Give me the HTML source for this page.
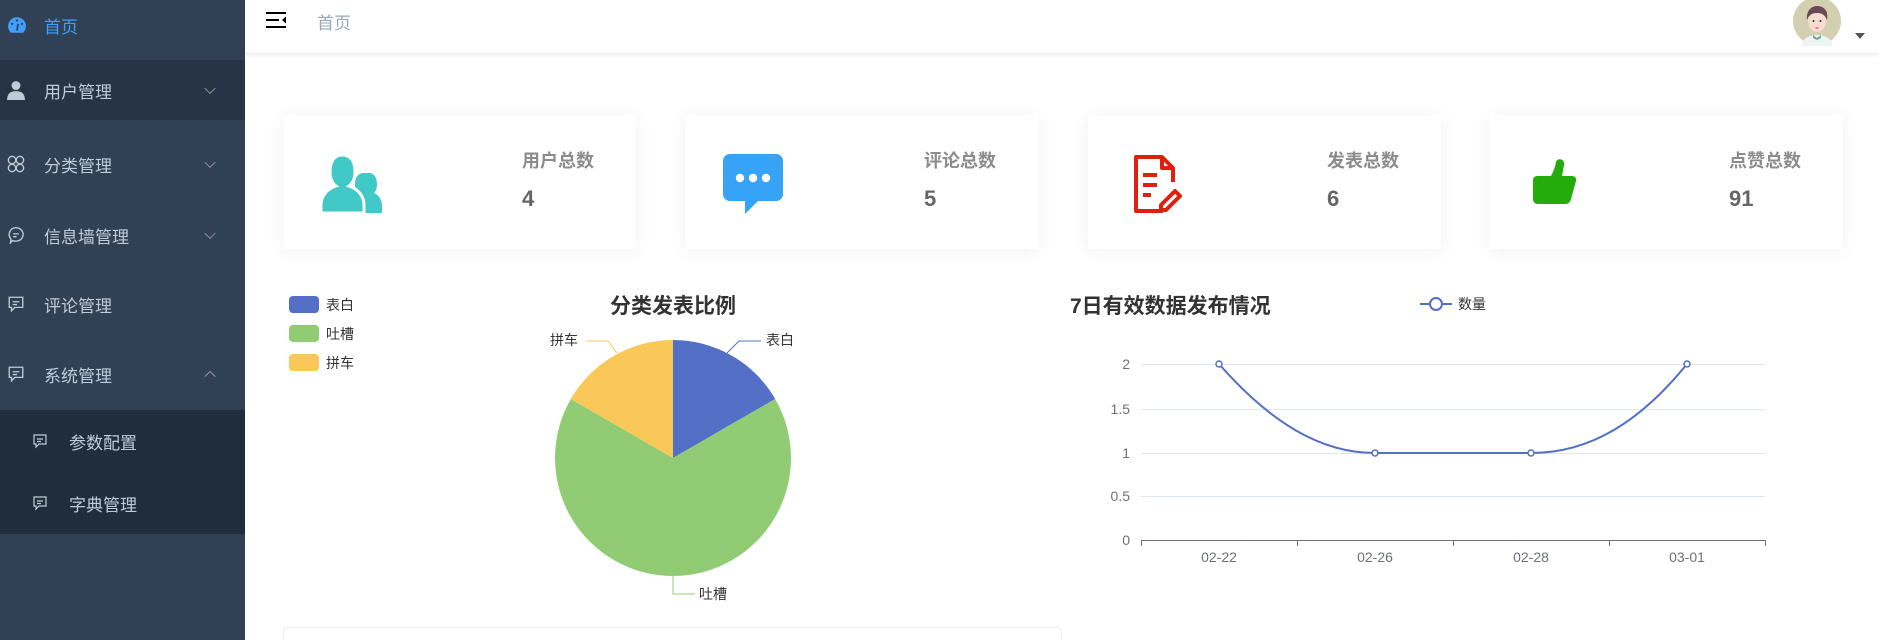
<!DOCTYPE html>
<html><head><meta charset="utf-8"><style>
*{margin:0;padding:0;box-sizing:border-box}
html,body{width:1879px;height:640px;overflow:hidden}
body{background:#fff;font-family:"Liberation Sans","Noto Sans CJK SC",sans-serif;position:relative}
.side{position:absolute;left:0;top:0;width:245px;height:640px;background:#304156}
.mi{position:absolute;left:0;width:245px;height:70px;color:#bfcbd9;font-size:17px;display:flex;align-items:center}
.mi .ic{position:absolute;left:7px;top:50%;transform:translateY(-50%);display:block;line-height:0}
.mi .t{position:absolute;left:44px}
.mi .ar{position:absolute;left:206px;top:50%;width:8px;height:8px;border-right:1px solid #909399;border-bottom:1px solid #909399;transform:translateY(-70%) rotate(45deg)}
.mi .ar.up{transform:translateY(-20%) rotate(-135deg)}
.sub{position:absolute;left:0;top:410px;width:245px;height:124px;background:#1f2d3d}
.header{position:absolute;left:245px;top:0;width:1634px;height:54px;background:#fff;box-shadow:0 1px 4px rgba(0,21,41,.08);border-bottom:1px solid #eee}
.card{position:absolute;top:115px;width:353px;height:134px;background:#fff;box-shadow:0 2px 18px rgba(0,0,0,.06)}
.card .ic{position:absolute;left:37px;top:38px;width:62px;height:62px}
.card .tt{position:absolute;left:239px;top:32px;font-size:18px;font-weight:bold;color:#8c8c8c}
.card .nm{position:absolute;left:239px;top:71px;font-size:22px;font-weight:bold;color:#666}
svg text{font-family:"Liberation Sans","Noto Sans CJK SC",sans-serif}
</style></head><body>
<div class="side">
 <div class="mi" style="top:-10px;color:#409eff"><span class="ic"><svg width="20" height="18" viewBox="0 0 18 16"><path d="M9 1A8 8 0 0 0 1 9c0 2.5 1 4.5 2.5 6h11C16 13.5 17 11.5 17 9A8 8 0 0 0 9 1z" fill="#409eff"/><circle cx="9" cy="4" r="1" fill="#304156"/><circle cx="4.5" cy="7" r="1" fill="#304156"/><circle cx="13.5" cy="7" r="1" fill="#304156"/><path d="M9 13 L10 7" stroke="#304156" stroke-width="1.6"/></svg></span><span class="t">首页</span></div>
 <div class="mi" style="top:60px;background:#263445;height:60px"><span class="ic"><svg width="18" height="20" viewBox="0 0 16 18"><circle cx="8" cy="5" r="4" fill="#bfcbd9"/><path d="M0 18c0-6 3-8 8-8s8 2 8 8z" fill="#bfcbd9"/></svg></span><span class="t">用户管理</span><span class="ar"></span></div>
 <div class="mi" style="top:129px"><span class="ic"><svg width="18" height="18" viewBox="0 0 16 16" fill="none" stroke="#bfcbd9" stroke-width="1.2"><circle cx="4.5" cy="4.5" r="3.3"/><circle cx="11.5" cy="4.5" r="3.3"/><circle cx="4.5" cy="11.5" r="3.3"/><circle cx="11.5" cy="11.5" r="3.3"/></svg></span><span class="t">分类管理</span><span class="ar"></span></div>
 <div class="mi" style="top:200px"><span class="ic"><svg width="18" height="18" viewBox="0 0 16 16" fill="none" stroke="#bfcbd9" stroke-width="1.2"><path d="M8 1.5a6.5 6 0 1 1-3 11.4L3 15l.5-3.5A6 6 0 0 1 8 1.5z"/><path d="M5.5 7h5M5.5 9.5h3"/></svg></span><span class="t">信息墙管理</span><span class="ar"></span></div>
 <div class="mi" style="top:269px"><span class="ic"><svg width="18" height="18" viewBox="0 0 16 16" fill="none" stroke="#bfcbd9" stroke-width="1.2"><path d="M2 2h12v9H7l-3 3v-3H2z"/><path d="M5 6h6M5 8.5h4"/></svg></span><span class="t">评论管理</span></div>
 <div class="mi" style="top:339px"><span class="ic"><svg width="18" height="18" viewBox="0 0 16 16" fill="none" stroke="#bfcbd9" stroke-width="1.2"><path d="M2 2h12v9H7l-3 3v-3H2z"/><path d="M5 6h6M5 8.5h4"/></svg></span><span class="t">系统管理</span><span class="ar up"></span></div>
 <div class="sub">
  <div class="mi" style="top:0;height:62px"><span class="ic" style="left:32px"><svg width="16" height="16" fill="none" stroke="#bfcbd9" stroke-width="1.2"><path d="M2 2h12v9H7l-3 3v-3H2z"/><path d="M5 6h6M5 8.5h4"/></svg></span><span class="t" style="left:69px">参数配置</span></div>
  <div class="mi" style="top:62px;height:62px"><span class="ic" style="left:32px"><svg width="16" height="16" fill="none" stroke="#bfcbd9" stroke-width="1.2"><path d="M2 2h12v9H7l-3 3v-3H2z"/><path d="M5 6h6M5 8.5h4"/></svg></span><span class="t" style="left:69px">字典管理</span></div>
 </div>
</div>
<div class="header">
 <svg style="position:absolute;left:21px;top:12px" width="20" height="16"><path d="M0 1h20M0 8h13M0 15h20" stroke="#000" stroke-width="2"/><path d="M20 4.5v7l-4-3.5z" fill="#000"/></svg>
 <span style="position:absolute;left:72px;top:9px;font-size:17px;color:#97a8be">首页</span>
 <svg style="position:absolute;left:1548px;top:0" width="48" height="46" viewBox="0 0 48 46"><circle cx="24" cy="21" r="24" fill="#d2d0b0"/><path d="M8 46c2-8 8-11 16-11s14 3 16 11z" fill="#eef4f4"/><path d="M20 35l4 3 4-3v3l-4 2-4-2z" fill="#6aa88e"/><ellipse cx="24" cy="21" rx="9" ry="11" fill="#f7ddd0"/><path d="M14 20c-1-10 5-14 10-14s12 3 10 14c-2-5-5-7-10-7s-8 2-10 7z" fill="#6a4a55"/><circle cx="20.5" cy="21" r="1" fill="#333"/><circle cx="27.5" cy="21" r="1" fill="#333"/><path d="M22.5 28h3" stroke="#e57" stroke-width="1.4"/></svg>
 <svg style="position:absolute;left:1610px;top:33px" width="10" height="6"><path d="M0 0h10L5 6z" fill="#555"/></svg>
</div>

<div class="card" style="left:283px"><svg class="ic" viewBox="0 0 62 62">
 <path d="M44 20c-6 0-9 5-9 11 0 4 1 7 3 9-5 2-8 7-8 13v7h32v-7c0-6-3-11-8-13 2-2 3-5 3-9 0-6-3-11-8-11z" fill="#40c9c6"/>
 <path d="M22 2c-8 0-12 7-12 17 0 7 3 12 6 14C7 36 1 43 1 52v8h43v-8c0-9-6-16-15-19 3-2 6-7 6-14C35 9 31 2 22 2z" fill="#40c9c6" stroke="#fff" stroke-width="3"/>
</svg><div class="tt">用户总数</div><div class="nm">4</div></div>
<div class="card" style="left:685px"><svg class="ic" viewBox="0 0 62 62"><rect x="1" y="1" width="60" height="47" rx="7" fill="#36a3f7"/><path d="M23 47v14l14-14z" fill="#36a3f7"/><circle cx="18" cy="25" r="4.2" fill="#fff"/><circle cx="31" cy="25" r="4.2" fill="#fff"/><circle cx="44" cy="25" r="4.2" fill="#fff"/></svg><div class="tt">评论总数</div><div class="nm">5</div></div>
<div class="card" style="left:1088px"><svg class="ic" viewBox="0 0 62 62" fill="none" stroke="#e0200e" stroke-width="4" stroke-linejoin="round"><path d="M38 58H11V4h26l11 11v14"/><path d="M37 4v11h11"/><path d="M18 22h14M18 32h14M18 42h8"/><path d="M36 52l14-14 5 5-14 14h-5z"/></svg><div class="tt">发表总数</div><div class="nm">6</div></div>
<div class="card" style="left:1490px"><svg class="ic" viewBox="0 0 62 62"><path d="M6 28c0-4 2-5 5-5h13c2-4 4-8 5-14 1-4 9-4 8 3l-2 11h10c3 0 5 3 4 5l-5 18c-1 4-3 5-6 5H11c-3 0-5-2-5-5z" fill="#24ac0d"/></svg><div class="tt">点赞总数</div><div class="nm">91</div></div>

<svg style="position:absolute;left:0;top:0" width="1879" height="640">
 <rect x="289" y="296" width="30" height="17" rx="4" fill="#5470c6"/><text x="326" y="310" font-size="14" fill="#333">表白</text>
 <rect x="289" y="325" width="30" height="17" rx="4" fill="#91cc75"/><text x="326" y="339" font-size="14" fill="#333">吐槽</text>
 <rect x="289" y="354" width="30" height="17" rx="4" fill="#fac858"/><text x="326" y="368" font-size="14" fill="#333">拼车</text>
 <text x="673" y="313" font-size="21" font-weight="bold" fill="#333" text-anchor="middle">分类发表比例</text>
 <path d="M673 458V340A118 118 0 0 1 775.2 399z" fill="#5470c6"/>
 <path d="M673 458L775.2 399A118 118 0 1 1 570.8 399z" fill="#91cc75"/>
 <path d="M673 458L570.8 399A118 118 0 0 1 673 340z" fill="#fac858"/>
 <path d="M727 353l12-12h22" fill="none" stroke="#5470c6"/><text x="766" y="345" font-size="14" fill="#333">表白</text>
 <path d="M617 353l-9-12h-22" fill="none" stroke="#fac858"/><text x="550" y="345" font-size="14" fill="#333">拼车</text>
 <path d="M673 576v18h22" fill="none" stroke="#91cc75"/><text x="699" y="599" font-size="14" fill="#333">吐槽</text>
 <text x="1070" y="313" font-size="21" font-weight="bold" fill="#333">7日有效数据发布情况</text>
 <path d="M1420 304h32" stroke="#5470c6" stroke-width="2"/><circle cx="1436" cy="304" r="6" fill="#fff" stroke="#5470c6" stroke-width="2"/>
 <text x="1458" y="309" font-size="14" fill="#333">数量</text>
 <g stroke="#e0e6f1"><path d="M1141 364.5H1765M1141 409.5H1765M1141 453.5H1765M1141 496.5H1765"/></g>
 <path d="M1141 540.5H1765" stroke="#6e7079"/>
 <g stroke="#6e7079"><path d="M1141.5 540v6M1297.5 540v6M1453.5 540v6M1609.5 540v6M1765.5 540v6"/></g>
 <g font-size="14" fill="#6e7079" text-anchor="end"><text x="1130" y="369">2</text><text x="1130" y="414">1.5</text><text x="1130" y="458">1</text><text x="1130" y="501">0.5</text><text x="1130" y="545">0</text></g>
 <g font-size="14" fill="#6e7079" text-anchor="middle"><text x="1219" y="562">02-22</text><text x="1375" y="562">02-26</text><text x="1531" y="562">02-28</text><text x="1687" y="562">03-01</text></g>
 <path d="M1219 364C1270 422 1320 453 1375 453L1531 453C1590 453 1640 422 1687 364" fill="none" stroke="#5470c6" stroke-width="2"/>
 <g fill="#fff" stroke="#5470c6" stroke-width="1.5"><circle cx="1219" cy="364" r="3"/><circle cx="1375" cy="453" r="3"/><circle cx="1531" cy="453" r="3"/><circle cx="1687" cy="364" r="3"/></g>
</svg>
<div style="position:absolute;left:0;top:0;width:1879px;height:640px;overflow:hidden;pointer-events:none"><div style="position:absolute;left:283px;top:627px;width:779px;height:30px;border:1px solid #ebeef5;border-radius:4px"></div></div>
</body></html>
